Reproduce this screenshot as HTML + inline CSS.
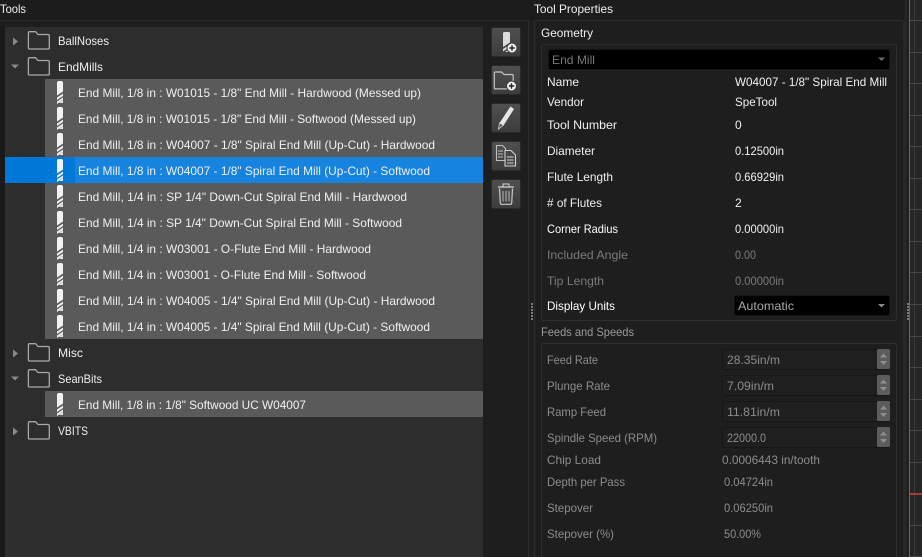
<!DOCTYPE html>
<html><head><meta charset="utf-8"><style>
html,body{margin:0;padding:0;background:#1e1e1e;width:922px;height:557px;overflow:hidden}
svg{display:block}
text{font-family:"Liberation Sans",sans-serif;font-size:12px;fill:#f0f0f0;white-space:pre}
.d{fill:#8c8c8c}
.m{fill:#a8a8a8}
.w{fill:#ffffff}
</style></head><body>
<svg width="922" height="557" viewBox="0 0 922 557" xmlns="http://www.w3.org/2000/svg">
<defs>
<g id="folder" fill="none" stroke="#a8a8a8" stroke-width="1.3">
<path d="M29.700 31.700h5.800l2.500 2.800h10a1.300 1.300 0 0 1 1.300 1.300v11.900a1.300 1.300 0 0 1-1.300 1.300H29.700a1.300 1.300 0 0 1-1.300-1.300V33a1.300 1.300 0 0 1 1.300-1.300z"/>
</g>
<g id="bit">
<path d="M57 83a2 2 0 0 1 2-2h2a2 2 0 0 1 2 2V91.500L57 95.500z" fill="#f2f2f2"/>
<path d="M57 97.500l6-4v2.500l-6 4zM57 101.500l6-4v2.500l-6 4zM59 103l4-2.700v2.700z" fill="#ececec"/>
</g>
<g id="arrR"><path d="M13 37.500l5 4-5 4z" fill="#8a8a8a"/></g>
<g id="arrD"><path d="M11 64.500h8l-4 4z" fill="#8a8a8a"/></g>
<g id="spin">
<rect x="877" y="349" width="13" height="20" rx="1.500" fill="#5c5c5c"/>
<path d="M880 357.500l3.500-4 3.500 4z" fill="#8f8f8f"/>
<path d="M880 361l3.500 4 3.500-4z" fill="#8f8f8f"/>
</g>
<linearGradient id="btn" x1="0" y1="0" x2="0" y2="1"><stop offset="0" stop-color="#505050"/><stop offset="1" stop-color="#3c3c3c"/></linearGradient>
</defs>

<rect width="922" height="557" fill="#1e1e1e"/>
<rect x="0" y="0" width="922" height="20" fill="#1c1c1c"/>
<rect x="0" y="20" width="529" height="1" fill="#2c2c2c"/>
<rect x="528" y="20" width="1" height="537" fill="#2c2c2c"/>
<rect x="0" y="26" width="5" height="531" fill="#191919"/>

<!-- right canvas -->
<rect x="905" y="0" width="17" height="557" fill="#202020"/>
<rect x="905" y="0" width="1" height="557" fill="#2c2c2c"/>
<rect x="909" y="0" width="13" height="557" fill="#262626"/>
<rect x="909" y="0" width="1" height="557" fill="#686868"/>
<rect x="914" y="0" width="1" height="557" fill="#3a3a3a"/>
<g fill="#464646">
<rect x="910" y="20" width="12" height="1"/><rect x="910" y="52" width="12" height="1"/><rect x="910" y="83" width="12" height="1"/><rect x="910" y="115" width="12" height="1"/><rect x="910" y="146" width="12" height="1"/><rect x="910" y="178" width="12" height="1"/><rect x="910" y="209" width="12" height="1"/><rect x="910" y="241" width="12" height="1"/><rect x="910" y="272" width="12" height="1"/><rect x="910" y="304" width="12" height="1"/><rect x="910" y="336" width="12" height="1"/><rect x="910" y="367" width="12" height="1"/><rect x="910" y="399" width="12" height="1"/><rect x="910" y="430" width="12" height="1"/><rect x="910" y="462" width="12" height="1"/><rect x="910" y="525" width="12" height="1"/><rect x="910" y="556" width="12" height="1"/>
</g>
<rect x="910" y="493" width="12" height="2" fill="#a83a32"/>
<g fill="#7a7a7a">
<rect x="531" y="303" width="2" height="2"/><rect x="531" y="306" width="2" height="2"/><rect x="531" y="309" width="2" height="2"/><rect x="531" y="312" width="2" height="2"/><rect x="531" y="315" width="2" height="2"/><rect x="531" y="318" width="2" height="2"/>
<rect x="907" y="303" width="2" height="2"/><rect x="907" y="306" width="2" height="2"/><rect x="907" y="309" width="2" height="2"/><rect x="907" y="312" width="2" height="2"/><rect x="907" y="315" width="2" height="2"/><rect x="907" y="318" width="2" height="2"/>
</g>

<!-- Tree -->
<rect x="5" y="27" width="478" height="530" fill="#2d2d2d"/>
<rect x="45" y="79" width="438" height="260" fill="#5a5a5a"/>
<rect x="45" y="391" width="438" height="26" fill="#5a5a5a"/>
<rect x="5" y="157" width="478" height="26" fill="#0078d7"/>
<rect x="75" y="157" width="408" height="26" fill="#1683de"/>

<use href="#arrR"/>
<use href="#arrD"/>
<use href="#arrR" y="312"/>
<use href="#arrD" y="312"/>
<use href="#arrR" y="390"/>
<use href="#folder"/>
<use href="#folder" y="26"/>
<use href="#folder" y="312"/>
<use href="#folder" y="338"/>
<use href="#folder" y="390"/>

<use href="#bit"/>
<use href="#bit" y="26"/>
<use href="#bit" y="52"/>
<use href="#bit" y="78"/>
<use href="#bit" y="104"/>
<use href="#bit" y="130"/>
<use href="#bit" y="156"/>
<use href="#bit" y="182"/>
<use href="#bit" y="208"/>
<use href="#bit" y="234"/>
<use href="#bit" y="312"/>

<text x="58" y="45" textLength="51" lengthAdjust="spacingAndGlyphs">BallNoses</text>
<text x="58" y="71" textLength="45" lengthAdjust="spacingAndGlyphs">EndMills</text>
<text x="58" y="357" textLength="25" lengthAdjust="spacingAndGlyphs">Misc</text>
<text x="58" y="383" textLength="44" lengthAdjust="spacingAndGlyphs">SeanBits</text>
<text x="58" y="435" textLength="30" lengthAdjust="spacingAndGlyphs">VBITS</text>

<text x="78" y="97" textLength="343" lengthAdjust="spacingAndGlyphs">End Mill, 1/8 in : W01015 - 1/8" End Mill - Hardwood (Messed up)</text>
<text x="78" y="123" textLength="338" lengthAdjust="spacingAndGlyphs">End Mill, 1/8 in : W01015 - 1/8" End Mill - Softwood (Messed up)</text>
<text x="78" y="149" textLength="357" lengthAdjust="spacingAndGlyphs">End Mill, 1/8 in : W04007 - 1/8" Spiral End Mill (Up-Cut) - Hardwood</text>
<text x="78" y="175" textLength="352" lengthAdjust="spacingAndGlyphs">End Mill, 1/8 in : W04007 - 1/8" Spiral End Mill (Up-Cut) - Softwood</text>
<text x="78" y="201" textLength="329" lengthAdjust="spacingAndGlyphs">End Mill, 1/4 in : SP 1/4" Down-Cut Spiral End Mill - Hardwood</text>
<text x="78" y="227" textLength="324" lengthAdjust="spacingAndGlyphs">End Mill, 1/4 in : SP 1/4" Down-Cut Spiral End Mill - Softwood</text>
<text x="78" y="253" textLength="293" lengthAdjust="spacingAndGlyphs">End Mill, 1/4 in : W03001 - O-Flute End Mill - Hardwood</text>
<text x="78" y="279" textLength="288" lengthAdjust="spacingAndGlyphs">End Mill, 1/4 in : W03001 - O-Flute End Mill - Softwood</text>
<text x="78" y="305" textLength="357" lengthAdjust="spacingAndGlyphs">End Mill, 1/4 in : W04005 - 1/4" Spiral End Mill (Up-Cut) - Hardwood</text>
<text x="78" y="331" textLength="352" lengthAdjust="spacingAndGlyphs">End Mill, 1/4 in : W04005 - 1/4" Spiral End Mill (Up-Cut) - Softwood</text>
<text x="78" y="409" textLength="228" lengthAdjust="spacingAndGlyphs">End Mill, 1/8 in : 1/8" Softwood UC W04007</text>

<!-- Titles -->
<text x="0" y="13" textLength="26" lengthAdjust="spacingAndGlyphs">Tools</text>
<text x="534" y="13" textLength="79" lengthAdjust="spacingAndGlyphs">Tool Properties</text>

<!-- Buttons -->
<g fill="url(#btn)" stroke="#2a2a2a">
<rect x="491.500" y="27.500" width="29" height="29" rx="2"/>
<rect x="491.500" y="65.500" width="29" height="29" rx="2"/>
<rect x="491.500" y="103.500" width="29" height="29" rx="2"/>
<rect x="491.500" y="141.500" width="29" height="29" rx="2"/>
<rect x="491.500" y="179.500" width="29" height="29" rx="2"/>
</g>
<!-- add tool -->
<path d="M503 33.500a1.500 1.500 0 0 1 1.500-1.500h4a1.500 1.500 0 0 1 1.500 1.500v9l-7 4.500z" fill="#dcdcdc"/>
<path d="M503 49l6.500-4.300v2.500l-6.500 4.300zM505 52l4-2.700v2.700z" fill="#dcdcdc"/>
<circle cx="512" cy="48" r="5" fill="#f0f0f0" stroke="#3c3c3c" stroke-width="1"/>
<path d="M509.300 48h5.400M512 45.300v5.400" stroke="#222" stroke-width="1.400"/>
<!-- add folder -->
<path d="M495.500 72h6l2.500 2.500h8a1.200 1.200 0 0 1 1.200 1.200v12a1.200 1.200 0 0 1-1.200 1.200h-16.500a1.200 1.200 0 0 1-1.200-1.200V73.200a1.200 1.200 0 0 1 1.200-1.200z" fill="none" stroke="#c4c4c4" stroke-width="1.200"/>
<circle cx="511.500" cy="86" r="5" fill="#f0f0f0" stroke="#3c3c3c" stroke-width="1"/>
<path d="M508.800 86h5.400M511.500 83.300v5.400" stroke="#222" stroke-width="1.400"/>
<!-- pencil -->
<path d="M510.500 106.500l3.500 2.500-10.500 16.500-4.500 3 .5-5.500z" fill="#e6e6e6"/>
<path d="M499.500 123l3.800 2.300-4.800 3.700z" fill="#555"/>
<path d="M499.500 123l3.800 2.300-4.800 3.700z" fill="none" stroke="#cfcfcf" stroke-width=".8"/>
<!-- copy -->
<path d="M496.500 145.500h6l3 3v12h-9z" fill="none" stroke="#bdbdbd" stroke-width="1.100"/>
<path d="M498 151h5M498 154h5M498 157h5" stroke="#bdbdbd" stroke-width="1"/>
<path d="M505 150.500h6l4.500 4.500v11h-10.500z" fill="#474747" stroke="#d0d0d0" stroke-width="1.100"/>
<path d="M507 157h6.500M507 160h6.500M507 163h6.500" stroke="#d0d0d0" stroke-width="1"/>
<!-- trash -->
<path d="M498 187h16" stroke="#d0d0d0" stroke-width="1.300"/>
<path d="M503 186.500v-2.500h6v2.500" fill="none" stroke="#d0d0d0" stroke-width="1"/>
<path d="M499.500 188.500l.8 14.500a1.500 1.500 0 0 0 1.500 1.300h8.400a1.500 1.500 0 0 0 1.500-1.300l.8-14.500" fill="none" stroke="#c8c8c8" stroke-width="1.200"/>
<path d="M503 191v10.500M506 191v10.500M509 191v10.500" stroke="#a8a8a8" stroke-width="1.200"/>

<!-- Properties frames -->
<path d="M534.500 557V23a2.500 2.500 0 0 1 2.500-2.500h364.500a2.500 2.500 0 0 1 2.500 2.500v534" fill="none" stroke="#2e2e2e"/>
<rect x="541.500" y="44.500" width="355" height="276" rx="2" fill="none" stroke="#2e2e2e"/>
<path d="M541.500 557V345.500a2 2 0 0 1 2-2h351a2 2 0 0 1 2 2V557" fill="none" stroke="#2e2e2e"/>

<text x="541" y="37" textLength="52" lengthAdjust="spacingAndGlyphs">Geometry</text>
<text x="541" y="336" textLength="93" lengthAdjust="spacingAndGlyphs" class="m" style="fill:#9a9a9a">Feeds and Speeds</text>

<!-- Combos -->
<rect x="548.500" y="49.500" width="341" height="20" rx="2" fill="#000" stroke="#141414"/>
<text x="552" y="64" textLength="43" lengthAdjust="spacingAndGlyphs" class="d" style="fill:#777">End Mill</text>
<path d="M878 57.500h7l-3.500 3.500z" fill="#6a6a6a"/>
<rect x="734.500" y="295.500" width="155" height="20" rx="2" fill="#000" stroke="#141414"/>
<text x="738" y="310" textLength="56" lengthAdjust="spacingAndGlyphs" class="m">Automatic</text>
<path d="M878 304h7l-3.500 3.500z" fill="#8a8a8a"/>

<!-- Geometry labels -->
<text x="547" y="86" textLength="32" lengthAdjust="spacingAndGlyphs">Name</text>
<text x="547" y="106" textLength="37" lengthAdjust="spacingAndGlyphs">Vendor</text>
<text x="547" y="129" textLength="70" lengthAdjust="spacingAndGlyphs">Tool Number</text>
<text x="547" y="155" textLength="48" lengthAdjust="spacingAndGlyphs">Diameter</text>
<text x="547" y="181" textLength="66" lengthAdjust="spacingAndGlyphs">Flute Length</text>
<text x="547" y="207" textLength="55" lengthAdjust="spacingAndGlyphs"># of Flutes</text>
<text x="547" y="233" textLength="71" lengthAdjust="spacingAndGlyphs" class="w">Corner Radius</text>
<text x="547" y="259" textLength="81" lengthAdjust="spacingAndGlyphs" class="d" style="fill:#7a7a7a">Included Angle</text>
<text x="547" y="285" textLength="57" lengthAdjust="spacingAndGlyphs" class="d" style="fill:#7a7a7a">Tip Length</text>
<text x="547" y="310" textLength="68" lengthAdjust="spacingAndGlyphs" class="w">Display Units</text>

<text x="735" y="86" textLength="152" lengthAdjust="spacingAndGlyphs">W04007 - 1/8" Spiral End Mill</text>
<text x="735" y="106" textLength="42" lengthAdjust="spacingAndGlyphs">SpeTool</text>
<text x="735" y="129">0</text>
<text x="735" y="155" textLength="49" lengthAdjust="spacingAndGlyphs">0.12500in</text>
<text x="735" y="181" textLength="49" lengthAdjust="spacingAndGlyphs">0.66929in</text>
<text x="735" y="207">2</text>
<text x="735" y="233" textLength="49" lengthAdjust="spacingAndGlyphs">0.00000in</text>
<text x="735" y="259" textLength="21" lengthAdjust="spacingAndGlyphs" class="d" style="fill:#7a7a7a">0.00</text>
<text x="735" y="285" textLength="49" lengthAdjust="spacingAndGlyphs" class="d" style="fill:#7a7a7a">0.00000in</text>

<!-- Feeds -->
<g fill="#1f1f1f" stroke="#171717">
<rect x="722.500" y="349.500" width="167" height="20" rx="2"/>
<rect x="722.500" y="375.500" width="167" height="20" rx="2"/>
<rect x="722.500" y="401.500" width="167" height="20" rx="2"/>
<rect x="722.500" y="427.500" width="167" height="20" rx="2"/>
</g>
<use href="#spin"/>
<use href="#spin" y="26"/>
<use href="#spin" y="52"/>
<use href="#spin" y="78"/>

<g class="fd">
<text x="547" y="364" textLength="51" lengthAdjust="spacingAndGlyphs" class="d">Feed Rate</text>
<text x="547" y="390" textLength="63" lengthAdjust="spacingAndGlyphs" class="d">Plunge Rate</text>
<text x="547" y="416" textLength="59" lengthAdjust="spacingAndGlyphs" class="d">Ramp Feed</text>
<text x="547" y="442" textLength="110" lengthAdjust="spacingAndGlyphs" class="d">Spindle Speed (RPM)</text>
<text x="547" y="464" textLength="54" lengthAdjust="spacingAndGlyphs" class="d">Chip Load</text>
<text x="547" y="486" textLength="78" lengthAdjust="spacingAndGlyphs" class="d">Depth per Pass</text>
<text x="547" y="512" textLength="46" lengthAdjust="spacingAndGlyphs" class="d">Stepover</text>
<text x="547" y="538" textLength="67" lengthAdjust="spacingAndGlyphs" class="d">Stepover (%)</text>
<text x="727" y="364" textLength="53" lengthAdjust="spacingAndGlyphs" class="d">28.35in/m</text>
<text x="727" y="390" textLength="47" lengthAdjust="spacingAndGlyphs" class="d">7.09in/m</text>
<text x="727" y="416" textLength="53" lengthAdjust="spacingAndGlyphs" class="d">11.81in/m</text>
<text x="727" y="442" textLength="39" lengthAdjust="spacingAndGlyphs" class="d">22000.0</text>
<text x="722" y="464" textLength="98" lengthAdjust="spacingAndGlyphs" class="d">0.0006443 in/tooth</text>
<text x="724" y="486" textLength="49" lengthAdjust="spacingAndGlyphs" class="d">0.04724in</text>
<text x="724" y="512" textLength="49" lengthAdjust="spacingAndGlyphs" class="d">0.06250in</text>
<text x="724" y="538" textLength="37" lengthAdjust="spacingAndGlyphs" class="d">50.00%</text>
</g>
</svg>
</body></html>
